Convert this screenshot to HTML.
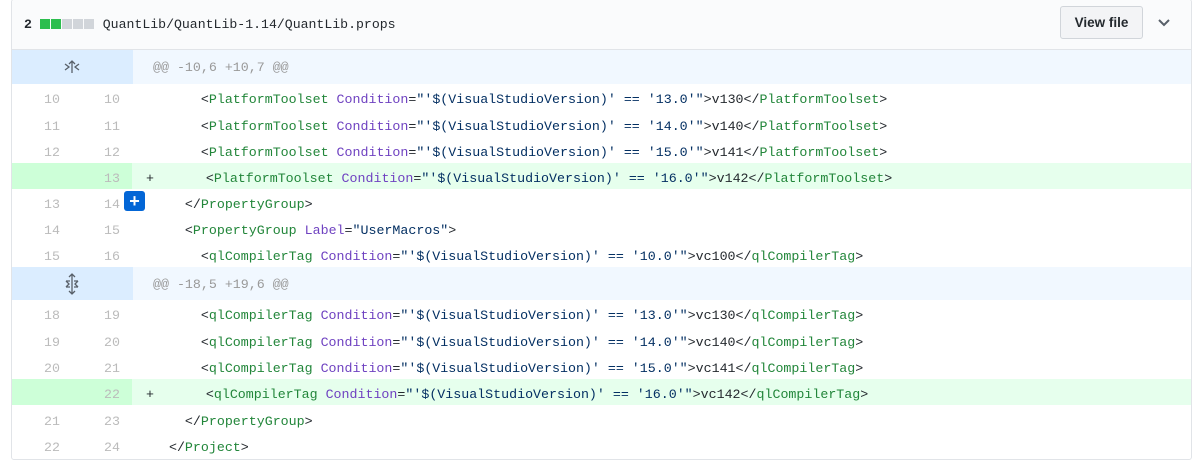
<!DOCTYPE html><html><head><style>
body{margin:0;background:#fff;width:1200px;height:468px;overflow:hidden;font-family:"Liberation Mono",monospace;}
.box{position:absolute;left:11px;top:-1px;width:1179px;height:459px;border:1px solid #e1e4e8;border-radius:3px;overflow:hidden}
.hdr{height:49px;background:#fafbfc;border-bottom:1px solid #e1e4e8;position:relative}
.hdr .t{position:absolute;left:12px;top:17px;font-size:13.2px;color:#24292e}
.sq{display:inline-block;width:10px;height:10px;margin-right:1px;vertical-align:-1px}
.btn{position:absolute;left:1048px;top:6px;width:81px;height:31px;border:1px solid #d1d5da;border-radius:3px;background:#f3f4f6;font-family:"Liberation Sans",sans-serif;font-size:13.5px;font-weight:bold;color:#24292e;text-align:center;line-height:31px}
.row{position:relative;font-size:13.3px;color:#24292e;white-space:pre}
.n{position:absolute;top:3px;width:60px;height:100%;text-align:right;color:#bbb;box-sizing:border-box;padding-right:12px}
.add .n{top:0;padding-top:3px}
.n1{left:0}.n2{left:60px}
.c{position:absolute;left:141px;top:3px}
.pl{position:absolute;left:134px;top:3px}
.hk{background:#f1f8ff;color:#999}
.hk .g{position:absolute;left:0;top:0;width:121px;height:100%;background:#dbedff}
.hk .c{top:1px}
.add{background:#e6ffed}
.add .n{background:#cdffd8}
.tg{color:#22863a}.at{color:#6f42c1}.s{color:#032f62}
</style></head><body>
<div class="box">
<div class="hdr"><div class="t"><b>2</b> <span class="sq" style="background:#2cbe4e"></span><span class="sq" style="background:#2cbe4e"></span><span class="sq" style="background:#d1d5da"></span><span class="sq" style="background:#d1d5da"></span><span class="sq" style="background:#d1d5da"></span> QuantLib/QuantLib-1.14/QuantLib.props</div>
<div class="btn">View file</div>
<svg style="position:absolute;left:1146px;top:19px" width="12" height="8"><path d="M1 1l5 5 5-5" stroke="#586069" stroke-width="2" fill="none"/></svg></div>

<div class="row hk" style="height:34px;line-height:34px"><div class="g"><svg style="position:absolute;left:51px;top:10px" width="18" height="14"><path d="M9 1v12M6 4l3-3 3 3M2 4l4 3-4 3M16 4l-4 3 4 3" stroke="#586069" stroke-width="1.3" fill="none"/></svg></div><span class="c">@@ -10,6 +10,7 @@</span></div>
<div class="row" style="height:26px;line-height:26px"><span class="n n1">10</span><span class="n n2">10</span><span class="c">      &lt;<span class="tg">PlatformToolset</span> <span class="at">Condition</span>=<span class="s">"'$(VisualStudioVersion)' == '13.0'"</span>&gt;v130&lt;/<span class="tg">PlatformToolset</span>&gt;</span></div>
<div class="row" style="height:27px;line-height:27px"><span class="n n1">11</span><span class="n n2">11</span><span class="c">      &lt;<span class="tg">PlatformToolset</span> <span class="at">Condition</span>=<span class="s">"'$(VisualStudioVersion)' == '14.0'"</span>&gt;v140&lt;/<span class="tg">PlatformToolset</span>&gt;</span></div>
<div class="row" style="height:26px;line-height:26px"><span class="n n1">12</span><span class="n n2">12</span><span class="c">      &lt;<span class="tg">PlatformToolset</span> <span class="at">Condition</span>=<span class="s">"'$(VisualStudioVersion)' == '15.0'"</span>&gt;v141&lt;/<span class="tg">PlatformToolset</span>&gt;</span></div>
<div class="row add" style="height:26px;line-height:26px"><span class="n n1"></span><span class="n n2">13</span><span class="pl">+</span><span class="c" style="left:146px">      &lt;<span class="tg">PlatformToolset</span> <span class="at">Condition</span>=<span class="s">"'$(VisualStudioVersion)' == '16.0'"</span>&gt;v142&lt;/<span class="tg">PlatformToolset</span>&gt;</span></div>
<div class="row" style="height:26px;line-height:26px"><span class="n n1">13</span><span class="n n2">14</span><span class="c">    &lt;/<span class="tg">PropertyGroup</span>&gt;</span><div style="position:absolute;left:112px;top:2px;width:21px;height:20px;background:#0366d6;border-radius:3px;color:#fff;font:bold 18px/20px 'Liberation Sans',sans-serif;text-align:center">+</div></div>
<div class="row" style="height:26px;line-height:26px"><span class="n n1">14</span><span class="n n2">15</span><span class="c">    &lt;<span class="tg">PropertyGroup</span> <span class="at">Label</span>=<span class="s">"UserMacros"</span>&gt;</span></div>
<div class="row" style="height:26px;line-height:26px"><span class="n n1">15</span><span class="n n2">16</span><span class="c">      &lt;<span class="tg">qlCompilerTag</span> <span class="at">Condition</span>=<span class="s">"'$(VisualStudioVersion)' == '10.0'"</span>&gt;vc100&lt;/<span class="tg">qlCompilerTag</span>&gt;</span></div>
<div class="row hk" style="height:33px;line-height:33px"><div class="g"><svg style="position:absolute;left:51px;top:6px" width="18" height="22"><path d="M9 1v20M6 4l3-3 3 3M6 18l3 3 3-3M3 8l3 3-3 3M15 8l-3 3 3 3M3 8h4M15 8h-4M3 14h4M15 14h-4" stroke="#586069" stroke-width="1.3" fill="none"/></svg></div><span class="c">@@ -18,5 +19,6 @@</span></div>
<div class="row" style="height:26px;line-height:26px"><span class="n n1">18</span><span class="n n2">19</span><span class="c">      &lt;<span class="tg">qlCompilerTag</span> <span class="at">Condition</span>=<span class="s">"'$(VisualStudioVersion)' == '13.0'"</span>&gt;vc130&lt;/<span class="tg">qlCompilerTag</span>&gt;</span></div>
<div class="row" style="height:27px;line-height:27px"><span class="n n1">19</span><span class="n n2">20</span><span class="c">      &lt;<span class="tg">qlCompilerTag</span> <span class="at">Condition</span>=<span class="s">"'$(VisualStudioVersion)' == '14.0'"</span>&gt;vc140&lt;/<span class="tg">qlCompilerTag</span>&gt;</span></div>
<div class="row" style="height:26px;line-height:26px"><span class="n n1">20</span><span class="n n2">21</span><span class="c">      &lt;<span class="tg">qlCompilerTag</span> <span class="at">Condition</span>=<span class="s">"'$(VisualStudioVersion)' == '15.0'"</span>&gt;vc141&lt;/<span class="tg">qlCompilerTag</span>&gt;</span></div>
<div class="row add" style="height:26px;line-height:26px"><span class="n n1"></span><span class="n n2">22</span><span class="pl">+</span><span class="c" style="left:146px">      &lt;<span class="tg">qlCompilerTag</span> <span class="at">Condition</span>=<span class="s">"'$(VisualStudioVersion)' == '16.0'"</span>&gt;vc142&lt;/<span class="tg">qlCompilerTag</span>&gt;</span></div>
<div class="row" style="height:27px;line-height:27px"><span class="n n1">21</span><span class="n n2">23</span><span class="c">    &lt;/<span class="tg">PropertyGroup</span>&gt;</span></div>
<div class="row" style="height:26px;line-height:26px"><span class="n n1">22</span><span class="n n2">24</span><span class="c">  &lt;/<span class="tg">Project</span>&gt;</span></div>
</div>
</body></html>
